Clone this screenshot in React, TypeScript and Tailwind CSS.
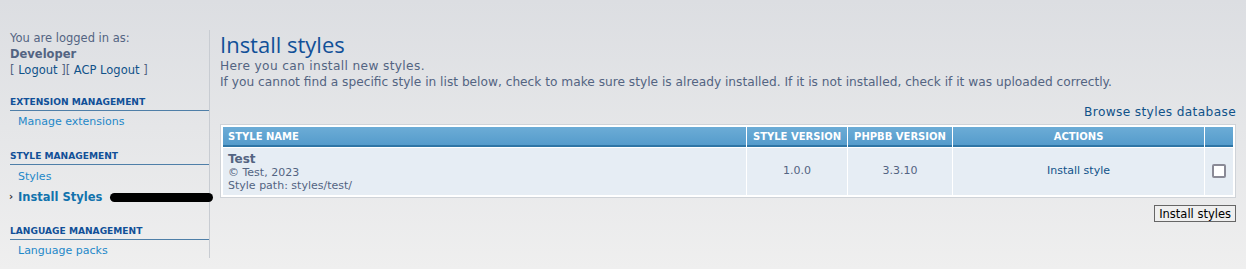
import React from "react";

const font = { fontFamily: '"DejaVu Sans", Verdana, sans-serif' };

function SectionHead({ children }: { children: React.ReactNode }) {
  return (
    <div className="text-[9.1px] font-bold text-[#115098] border-b border-[#4f7fa8] pb-[1px] leading-[14px]">
      {children}
    </div>
  );
}

export default function App() {
  return (
    <div
      className="w-[1246px] h-[269px] bg-gradient-to-b from-[#dcdee2] to-[#efefef] text-[11px] text-[#536482] overflow-hidden"
      style={font}
    >
      <div className="flex pt-[30px] pl-[10px] pr-[10px]">
        {/* sidebar */}
        <div className="w-[200px] shrink-0 border-r border-[#c8ccd2] h-[228px] leading-[16px]">
          <div className="text-[11.5px]">You are logged in as:</div>
          <div className="font-bold text-[11.5px]">Developer</div>
          <div className="text-[#105289] text-[11.5px]">
            <span className="text-[#536482]">[ </span>Logout<span className="text-[#536482]"> ][ </span>ACP Logout
            <span className="text-[#536482]"> ]</span>
          </div>
          <div className="mt-[17px]">
            <SectionHead>EXTENSION MANAGEMENT</SectionHead>
            <div className="pl-[8px] pt-[3px] text-[#1e88c9]">Manage extensions</div>
          </div>
          <div className="mt-[19px]">
            <SectionHead>STYLE MANAGEMENT</SectionHead>
            <div className="pl-[8px] pt-[4px] text-[#1e88c9]">Styles</div>
            <div className="relative pl-[8px] pt-[4px] whitespace-nowrap">
              <span className="absolute left-[-1px] top-[4px] text-[10px] font-bold text-[#333]">›</span>
              <span className="font-bold text-[#1273ad] text-[11.5px]">Install Styles</span>
              <span className="absolute left-[100px] top-[8px] w-[103px] h-[9px] rounded-full bg-black"></span>
            </div>
          </div>
          <div className="mt-[18px]">
            <SectionHead>LANGUAGE MANAGEMENT</SectionHead>
            <div className="pl-[8px] pt-[3px] text-[#1e88c9]">Language packs</div>
          </div>
        </div>

        {/* main */}
        <div className="flex-1 pl-[10px] pt-[1px]">
          <h1
            className="text-[22px] leading-[26px] text-[#115098]"
            style={{ fontFamily: '"Open Sans", "DejaVu Sans", sans-serif' }}
          >
            Install styles
          </h1>
          <p className="leading-[16px] mt-[1px] text-[12.2px] tracking-[0.35px]">Here you can install new styles.</p>
          <p className="leading-[16px] text-[12.2px]">
            If you cannot find a specific style in list below, check to make sure style is already installed. If it is not installed, check if it was uploaded correctly.
          </p>
          <div className="text-right text-[#105289] mt-[14px] leading-[16px] text-[12.2px] tracking-[0.35px]">Browse styles database</div>
          <div className="mt-[4px] border border-[#cfd3d8] bg-white p-[1px]">
            <table className="w-full border-separate border-spacing-[1px] text-[11px]">
              <thead>
                <tr className="text-white text-[10px] font-bold">
                  <th className="text-left pl-[5px] h-[20px] bg-gradient-to-b from-[#6cacd6] to-[#559ccc] border-b-2 border-[#2f76a6]">STYLE NAME</th>
                  <th className="w-[100px] bg-gradient-to-b from-[#6cacd6] to-[#559ccc] border-b-2 border-[#2f76a6]">STYLE VERSION</th>
                  <th className="w-[104px] bg-gradient-to-b from-[#6cacd6] to-[#559ccc] border-b-2 border-[#2f76a6]">PHPBB VERSION</th>
                  <th className="w-[251px] bg-gradient-to-b from-[#6cacd6] to-[#559ccc] border-b-2 border-[#2f76a6]">ACTIONS</th>
                  <th className="w-[28px] bg-gradient-to-b from-[#6cacd6] to-[#559ccc] border-b-2 border-[#2f76a6]"></th>
                </tr>
              </thead>
              <tbody>
                <tr className="bg-[#e6edf4] h-[47px]">
                  <td className="pl-[5px] leading-[13px] py-[3px]">
                    <div className="font-bold text-[12px] leading-[14px]">Test</div>
                    <div>© Test, 2023</div>
                    <div>Style path: styles/test/</div>
                  </td>
                  <td className="text-center">1.0.0</td>
                  <td className="text-center">3.3.10</td>
                  <td className="text-center text-[#105289]">Install style</td>
                  <td className="text-center">
                    <span className="inline-block w-[14px] h-[14px] border-2 border-[#8a8a96] rounded-[2px] bg-white align-middle"></span>
                  </td>
                </tr>
              </tbody>
            </table>
          </div>
          <div className="flex justify-end mt-[7px]">
            <button className="bg-[#efefef] border border-[#666] text-black text-[11.5px] px-[4px] leading-[14px] h-[17px]" style={font}>
              Install styles
            </button>
          </div>
        </div>
      </div>
    </div>
  );
}
